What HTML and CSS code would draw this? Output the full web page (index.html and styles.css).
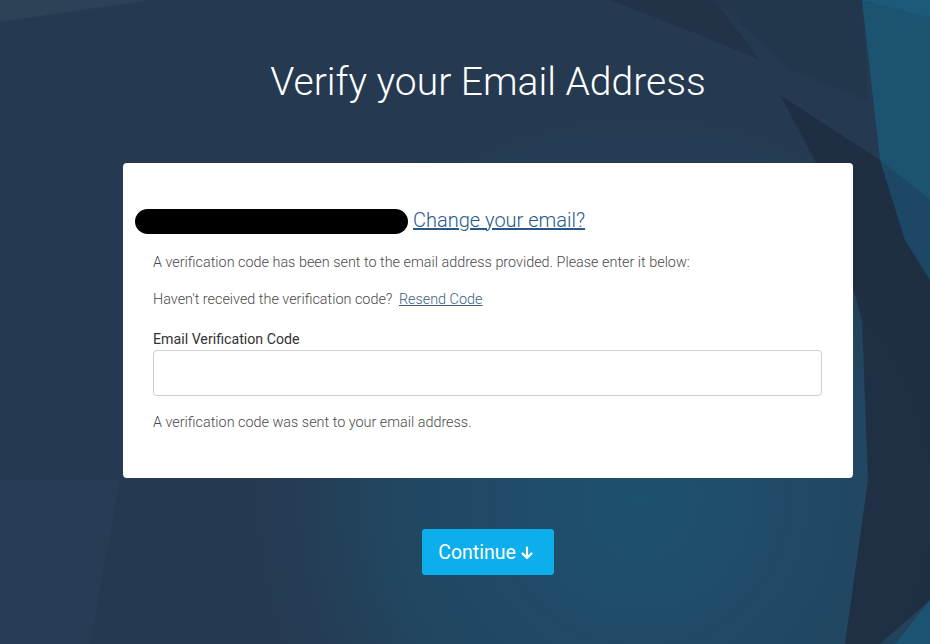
FILE: index.html
```html
<!DOCTYPE html>
<html lang="en">
<head>
    <meta charset="UTF-8">
    <meta name="viewport" content="width=device-width, initial-scale=1.0">
    <title>Verify your Email Address</title>
    <link rel="stylesheet" href="styles.css">
</head>
<body>

    <!-- background shapes -->
    <svg class="bg" viewBox="0 0 930 644" preserveAspectRatio="none">
        <defs>
            <radialGradient id="glow" cx="640" cy="500" r="430" gradientUnits="userSpaceOnUse">
                <stop offset="0" stop-color="#1d5170"/>
                <stop offset="0.6" stop-color="#224660"/>
                <stop offset="1" stop-color="#243a52" stop-opacity="0"/>
            </radialGradient>
        </defs>
        <rect width="930" height="644" fill="#253a51"/>
        <rect width="930" height="644" fill="url(#glow)"/>
        <polygon points="0,0 150,0 0,22" fill="#2c4257"/>
        <polygon points="610,0 715,0 760,60 700,35" fill="#202d3f" opacity="0.45"/>
        <polygon points="715,0 862,0 868,100 790,70" fill="#21344a" opacity="0.6"/>
        <polygon points="862,0 930,0 930,200 880,160" fill="#1b5371"/>
        <polygon points="862,0 930,0 930,18" fill="#1d5a79"/>
        <polygon points="780,95 880,160 905,240 930,280 930,600 880,644 845,644 868,480 862,320 820,170" fill="#1f2d40" opacity="0.85"/>
        <polygon points="880,160 930,200 930,280 905,240" fill="#1c4866"/>
        <polygon points="930,600 930,644 895,644" fill="#1c5372"/>
        <polygon points="0,480 120,480 90,644 0,644" fill="#27405a" opacity="0.5"/>
    </svg>

    <div class="page">
        <h1 class="title">Verify your Email Address</h1>

        <div class="card">
            <div class="email-row">
                <span class="redacted"></span>
                <a href="#" class="change-link">Change your email?</a>
            </div>

            <div class="card-body">
                <p class="info">A verification code has been sent to the email address provided. Please enter it below:</p>
                <p class="info">Haven't received the verification code? <a href="#" class="resend">Resend Code</a></p>

                <label class="field-label" for="code">Email Verification Code</label>
                <input type="text" id="code" class="code-input">

                <p class="info helper">A verification code was sent to your email address.</p>
            </div>
        </div>

        <button class="btn-continue">Continue
            <svg class="arrow" width="12" height="14" viewBox="0 0 12 14">
                <path d="M6 1.5 V12 M1.5 7.5 L6 12 L10.5 7.5" fill="none" stroke="#fff" stroke-width="2.2" stroke-linecap="round" stroke-linejoin="round"/>
            </svg>
        </button>
    </div>

</body>
</html>
```

FILE: styles.css
```css
html, body {
    margin: 0;
    padding: 0;
}
body {
    font-family: Roboto, "Liberation Sans", sans-serif;
    background-color: #253a51;
    color: #555;
    width: 930px;
    height: 644px;
    overflow: hidden;
    position: relative;
}
.bg {
    position: absolute;
    left: 0;
    top: 0;
    width: 930px;
    height: 644px;
    z-index: 0;
}
.page {
    position: relative;
    z-index: 1;
    display: flex;
    flex-direction: column;
    align-items: center;
    padding-top: 55px;
    padding-left: 46px;
}
.title {
    margin: 0 0 54px 0;
    font-weight: 300;
    font-size: 39px;
    line-height: 54px;
    color: #fff;
}
.card {
    background-color: #fff;
    border-radius: 4px;
    width: 730px;
    height: 315px;
    box-sizing: border-box;
    padding: 45px 31px 0 12px;
}
.email-row {
    display: flex;
    align-items: center;
    height: 26px;
}
.redacted {
    display: inline-block;
    width: 273px;
    height: 25px;
    background: #000;
    border-radius: 13px;
    margin-right: 5px;
}
.change-link {
    font-size: 20px;
    font-weight: 300;
    color: #24598a;
    text-decoration: underline;
    margin-top: -3px;
}
.card-body {
    padding-left: 18px;
    padding-top: 20px;
}
.info {
    font-size: 14.4px;
    font-weight: 300;
    color: #4a4a4a;
    margin: 0 0 20px 0;
    line-height: 17px;
}
.resend {
    color: #3a5f80;
    text-decoration: underline;
    margin-left: 3px;
}
.field-label {
    display: block;
    font-size: 14.2px;
    color: #333;
    padding-top: 3px;
    margin-bottom: 2px;
    line-height: 17px;
}
.code-input {
    display: block;
    width: 100%;
    height: 46px;
    box-sizing: border-box;
    border: 1px solid #cfcfcf;
    border-radius: 4px;
    margin-bottom: 18px;
}
.helper {
    margin: 0;
}
button {
    border: none;
    cursor: pointer;
    font-family: Roboto, "Liberation Sans", sans-serif;
}
.btn-continue {
    margin-top: 51px;
    width: 132px;
    height: 46px;
    background-color: #0caeeb;
    color: #fff;
    font-size: 19.5px;
    border-radius: 3px;
    padding: 0 5px 0 0;
    display: flex;
    align-items: center;
    justify-content: center;
    gap: 5px;
}
.arrow {
    margin-top: 1px;
}
```
